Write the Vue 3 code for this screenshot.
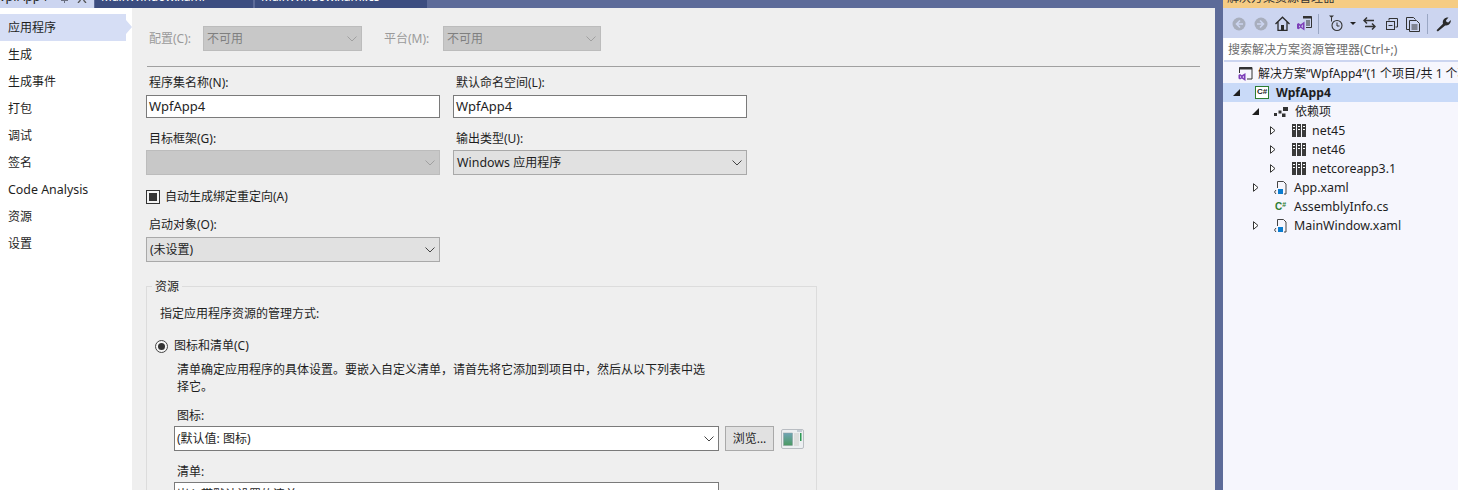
<script setup>
const navItems = ['应用程序', '生成', '生成事件', '打包', '调试', '签名', 'Code Analysis', '资源', '设置']
const chevron = 'M.5 .5L5 5l4.500-4.500'
</script>

<template>
  <div class="app">
    <div class="left">
      <div class="tabs">
        <div class="tab active">
          <span class="tab-text">WpfApp4</span>
          <svg class="tab-pin" width="7" height="3" viewBox="0 0 7 3"><path d="M0 .5h7M3.500 0v3" stroke="#6a6f80" fill="none" /></svg>
          <svg class="tab-x" width="10" height="3" viewBox="0 0 10 3"><path d="M1 3L3.500 0M9 3L6.500 0" stroke="#555" stroke-width="1.300" fill="none" /></svg>
        </div>
        <div class="tab t1"><span>MainWindow.xaml</span></div>
        <div class="tab t2"><span>MainWindow.xaml.cs</span></div>
      </div>
      <div class="editor">
        <nav class="nav">
          <div v-for="(n, i) in navItems" :key="n" class="nav-item" :class="{ sel: i === 0, lat: n === 'Code Analysis' }">{{ n }}</div>
        </nav>
        <main class="main">
          <div class="config">
            <span class="cfg-label l1">配置(C):</span>
            <div class="select disabled s1">不可用<svg class="chev" width="10" height="6" viewBox="0 0 10 6"><path :d="chevron" /></svg></div>
            <span class="cfg-label l2">平台(M):</span>
            <div class="select disabled s2">不可用<svg class="chev" width="10" height="6" viewBox="0 0 10 6"><path :d="chevron" /></svg></div>
          </div>
          <div class="sep"></div>

          <div class="two">
            <div class="col">
              <label class="lb">程序集名称(N):</label>
              <div class="input">WpfApp4</div>
            </div>
            <div class="col">
              <label class="lb">默认命名空间(L):</label>
              <div class="input">WpfApp4</div>
            </div>
          </div>

          <div class="two second">
            <div class="col">
              <label class="lb">目标框架(G):</label>
              <div class="select disabled"><svg class="chev" width="10" height="6" viewBox="0 0 10 6"><path :d="chevron" /></svg></div>
            </div>
            <div class="col">
              <label class="lb">输出类型(U):</label>
              <div class="select"><span class="lat">Windows </span>应用程序<svg class="chev dark" width="10" height="6" viewBox="0 0 10 6"><path :d="chevron" /></svg></div>
            </div>
          </div>

          <div class="check-row">
            <span class="check"><i></i></span>
            <span>自动生成绑定重定向(A)</span>
          </div>

          <div class="col startup">
            <label class="lb">启动对象(O):</label>
            <div class="select">(未设置)<svg class="chev dark" width="10" height="6" viewBox="0 0 10 6"><path :d="chevron" /></svg></div>
          </div>

          <section class="group">
            <span class="legend">资源</span>
            <p class="intro">指定应用程序资源的管理方式:</p>
            <div class="radio-row">
              <span class="radio"><i></i></span>
              <span>图标和清单(C)</span>
            </div>
            <div class="indent">
              <p class="desc">清单确定应用程序的具体设置。要嵌入自定义清单，请首先将它添加到项目中，然后从以下列表中选择它。</p>
              <label class="lb2">图标:</label>
              <div class="icon-row">
                <div class="combo">(默认值: 图标)<svg class="chev dark" width="10" height="6" viewBox="0 0 10 6"><path :d="chevron" /></svg></div>
                <div class="btn">浏览...</div>
                <svg class="preview" width="23" height="20" viewBox="0 0 23 20">
                  <rect x=".5" y=".5" width="22" height="19" rx="1.500" fill="#eceff1" stroke="#b9bdc2" />
                  <rect x="16" y="1" width="5" height="2" fill="#c3ccd4" />
                  <defs><linearGradient id="pv" x1="0" y1="0" x2="0" y2="1"><stop offset="0" stop-color="#6fa4b5" /><stop offset="1" stop-color="#4a9a62" /></linearGradient></defs>
                  <rect x="2.500" y="4" width="9" height="12.500" fill="url(#pv)" stroke="#8a9aa0" stroke-width=".5" />
                  <rect x="13" y="4" width="5" height="13" fill="#dcdedd" />
                  <rect x="19" y="4" width="1.500" height="8" fill="#2e9a55" />
                </svg>
              </div>
              <label class="lb2 manifest">清单:</label>
              <div class="combo wide">嵌入带默认设置的清单</div>
            </div>
          </section>
        </main>
      </div>
    </div>

    <aside class="panel">
      <div class="title"><span>解决方案资源管理器</span></div>
      <div class="toolbar">
        <svg width="14" height="14" viewBox="0 0 14 14" class="t-back"><circle cx="7" cy="7" r="6.500" fill="#a8aebd" /><path d="M8 3.500L4.500 7 8 10.500M4.500 7H11" stroke="#ccd5f0" stroke-width="1.600" fill="none" /></svg>
        <svg width="14" height="14" viewBox="0 0 14 14" class="t-fwd"><circle cx="7" cy="7" r="6.500" fill="#a8aebd" /><path d="M6 3.500L9.500 7 6 10.500M9.500 7H3" stroke="#ccd5f0" stroke-width="1.600" fill="none" /></svg>
        <svg width="15" height="15" viewBox="0 0 15 15" class="t-home"><path d="M.5 8L7.500 1.200 14.500 8M3 6v8.500h9V6" fill="none" stroke="#2a2a2a" stroke-width="1.300" /><rect x="6" y="9" width="3" height="5.500" fill="#2a2a2a" /></svg>
        <svg width="15" height="15" viewBox="0 0 15 15" class="t-sync"><path d="M6 .5h8.500v11H9" fill="#ccd5f0" stroke="#333" /><path d="M6 .5h8.500v2H6z" fill="#333" /><path d="M9 5h4M9 7h4M9 9h4" stroke="#333" /><path d="M0 8l1.500-1 2 1.500L7.500 5.500v9L3.500 11.800l-2 1.500L0 12.500zM2 9.200v2.400l1.200-1.200zM5.800 8.300l-1.500 2 1.500 2z" fill="#7d3fb8" fill-rule="evenodd" /></svg>
        <span class="t-div"></span>
        <svg width="16" height="17" viewBox="0 0 16 17" class="t-hist"><circle cx="9" cy="10.500" r="5" fill="none" stroke="#333" stroke-width="1.100" /><path d="M9 7.500V11h2.500" fill="none" stroke="#333" /><path d="M1 .5h5L3.500 3z" fill="#333" /><path d="M3.500 2.500v4" stroke="#333" /></svg>
        <svg width="6" height="3" viewBox="0 0 6 3" class="t-caret"><path d="M0 0h6L3 3z" fill="#222" /></svg>
        <svg width="13" height="13" viewBox="0 0 13 13" class="t-swap"><path d="M1 3.500h10M4 .5L1 3.500l3 3M12 9.500H2M9 6.500l3 3-3 3" fill="none" stroke="#333" stroke-width="1.500" /></svg>
        <svg width="12" height="12" viewBox="0 0 12 12" class="t-coll"><rect x=".5" y="3.500" width="8" height="8" fill="none" stroke="#333" /><path d="M3 2.500V.5h8.500V9h-2M2.500 7.500h4" fill="none" stroke="#333" /></svg>
        <svg width="15" height="15" viewBox="0 0 15 15" class="t-files"><path d="M3 12.500H.5V.5h7l2 2" fill="none" stroke="#333" /><path d="M3.500 3.500h7l3 3v8h-10z" fill="none" stroke="#333" /><path d="M5.500 8h6M5.500 10h6M5.500 12h6" stroke="#333" /></svg>
        <span class="t-div d2"></span>
        <svg width="15" height="15" viewBox="0 0 15 15" class="t-wrench"><path d="M1.800 14.500L.5 13.200 7 6.700C6.300 4.500 7 1.500 10.800.5c.7-.1 1.300 0 1.700.1L10 3.200l.5 1.800 1.800.5L14.800 3c.3 2.800-1.500 6-5.600 5.400z" fill="#2a2a2a" /></svg>
      </div>
      <div class="search">搜索解决方案资源管理器(Ctrl+;)</div>
      <div class="tree">
        <div class="row r0">
          <svg width="15" height="15" viewBox="0 0 15 15" class="ic"><path d="M1.500 7V1.500h12.500v11.500H9" fill="none" stroke="#333" /><path d="M1.500 2.500h12.500" stroke="#333" stroke-width="2" /><path d="M.5 9l1.500-1 1.800 1.300L7.500 7v8l-3.700-2.600L2 13.500l-1.500-1zM2.200 9.800v2.400l1.100-1.200zM5.800 9.800l-1.300 1.200 1.300 1.200z" fill="#7d3fb8" fill-rule="evenodd" /></svg>
          <span class="r0-text">解决方案“WpfApp4”(1 个项目/共 1 个项目)</span>
        </div>
        <div class="row r1 on">
          <svg width="7" height="7" viewBox="0 0 7 7" class="arr"><path d="M7 0v7H0z" fill="#1e1e1e" /></svg>
          <span class="cs">C#</span>
          <b>WpfApp4</b>
        </div>
        <div class="row r2">
          <svg width="7" height="7" viewBox="0 0 7 7" class="arr"><path d="M7 0v7H0z" fill="#1e1e1e" /></svg>
          <svg width="14" height="10" viewBox="0 0 14 10" class="dep"><path d="M9 0h5v4H9zM4.500 3.500h3v3h-3zM0 6h3v3H0zM8 6.500h3.500V10H8z" fill="#333" /></svg>
          <span>依赖项</span>
        </div>
        <div v-for="n in ['net45', 'net46', 'netcoreapp3.1']" :key="n" class="row r3">
          <svg width="6" height="9" viewBox="0 0 6 9" class="arr2"><path d="M.5.700L5 4.500.5 8.300z" fill="#fff" stroke="#333" /></svg>
          <svg width="14" height="13" viewBox="0 0 14 13" class="lib"><path d="M0 0h4v13H0zM5 0h4v13H5zM10 0h4v13h-4z" fill="#3a3a3a" /><path d="M1 2.500h2M6 2.500h2M11 2.500h2M1 5.500h2M6 5.500h2M11 5.500h2" stroke="#fff" /></svg>
          <span class="lat">{{ n }}</span>
        </div>
        <div class="row r4">
          <svg width="6" height="9" viewBox="0 0 6 9" class="arr2"><path d="M.5.700L5 4.500.5 8.300z" fill="#fff" stroke="#333" /></svg>
          <svg width="14" height="14" viewBox="0 0 14 14" class="doc"><path d="M3.500 7V.5h6l2.500 2.500v10H10" fill="none" stroke="#444" /><rect x="4" y="8" width="5" height="5" fill="#0a7ccf" /><path d="M2 9L.5 11 2 13" fill="none" stroke="#444" /></svg>
          <span class="lat">App.xaml</span>
        </div>
        <div class="row r5">
          <span class="csfile">C<sup>#</sup></span>
          <span class="lat">AssemblyInfo.cs</span>
        </div>
        <div class="row r4">
          <svg width="6" height="9" viewBox="0 0 6 9" class="arr2"><path d="M.5.700L5 4.500.5 8.300z" fill="#fff" stroke="#333" /></svg>
          <svg width="14" height="14" viewBox="0 0 14 14" class="doc"><path d="M3.500 7V.5h6l2.500 2.500v10H10" fill="none" stroke="#444" /><rect x="4" y="8" width="5" height="5" fill="#0a7ccf" /><path d="M2 9L.5 11 2 13" fill="none" stroke="#444" /></svg>
          <span class="lat">MainWindow.xaml</span>
        </div>
      </div>
    </aside>
  </div>
</template>

<style>
html, body { margin: 0; overflow: hidden; }
</style>

<style scoped>
.app {
  display: flex;
  width: 1458px;
  height: 490px;
  overflow: hidden;
  background: #5d6b99;
  font: 12px/16px "Noto Sans", "Noto Sans CJK SC", sans-serif;
  color: #1e1e1e;
}
.lat { font-size: 12.4px; }
.left { width: 1215px; display: flex; flex-direction: column; flex: none; }
.tabs { height: 8px; display: flex; overflow: hidden; flex: none; }
.tab { height: 8px; overflow: hidden; position: relative; color: #fff; font-size: 12px; line-height: 16px; white-space: nowrap; }
.tab span { display: block; margin-top: -11px; }
.tab.active { width: 94px; background: #ccd5f0; color: #1e1e1e; }
.tab.active .tab-text { position: absolute; left: -6px; top: 0; font-size: 12.4px; }
.tab-pin { position: absolute; left: 61px; top: 0; }
.tab-x { position: absolute; left: 77px; top: 0; }
.t1 { width: 158px; margin-left: 1px; background: #3c4d80; padding-left: 6px; box-sizing: border-box; }
.t2 { width: 172px; margin-left: 2px; background: #3c4d80; padding-left: 6px; box-sizing: border-box; }
.editor { flex: 1; display: flex; min-height: 0; }
.nav { width: 132px; flex: none; background: #fff; padding-top: 6px; box-sizing: border-box; }
.nav-item { height: 27px; line-height: 27px; padding-left: 8px; position: relative; width: 126px; box-sizing: border-box; }
.nav-item.sel { background: #d6def5; }
.nav-item.sel::after {
  content: ""; position: absolute; left: 126px; top: 6px;
  border-left: 6px solid #d6def5; border-top: 7px solid transparent; border-bottom: 7px solid transparent;
}
.main { flex: 1; background: #efefef; padding: 18px 15px 0 14px; min-width: 0; overflow: hidden; }
.config { display: flex; align-items: center; height: 25px; }
.cfg-label { color: #9a9a9a; }
.l1 { margin-left: 3px; width: 54px; }
.l2 { margin-left: 22px; width: 59px; }
.select {
  position: relative; width: 294px; height: 25px; line-height: 23px; box-sizing: border-box;
  background: #e1e1e1; border: 1px solid #a9a9a9; padding-left: 3px; color: #1e1e1e;
}
.select.disabled { background: #c8c8c8; border-color: #bcbcbc; color: #7f7f7f; }
.s1 { width: 159px; }
.s2 { width: 158px; }
.chev { position: absolute; right: 4px; top: 9px; fill: none; stroke: #a0a0a0; stroke-width: 1; }
.chev.dark { stroke: #444; }
.sep { height: 1px; background: #a0a0a0; margin: 15px 0 8px 1px; }
.two { display: flex; gap: 13px; }
.two.second { margin-top: 13px; }
.second .lb { margin-bottom: 4px; }
.col { width: 294px; display: flex; flex-direction: column; }
.lb { height: 15px; line-height: 15px; padding-left: 3px; margin-bottom: 5px; }
.input {
  height: 23px; line-height: 21px; box-sizing: border-box; background: #fff;
  border: 1px solid #7a7a7a; padding-left: 2px; font-size: 13px;
}
.check-row { display: flex; align-items: center; height: 14px; gap: 5px; margin-top: 15px; }
.check { width: 14px; height: 14px; box-sizing: border-box; border: 1px solid #333; display: flex; align-items: center; justify-content: center; background: #f4f4f4; }
.check i { width: 8px; height: 8px; background: #333; display: block; }
.startup { margin-top: 13px; }
.group {
  position: relative; width: 671px; height: 260px; box-sizing: border-box; margin-top: 24px;
  border: 1px solid #dcdcdc; padding: 19px 0 0 13px;
}
.legend { position: absolute; left: 5px; top: -8px; background: #efefef; padding: 0 3px; line-height: 15px; }
.intro { margin: 0; line-height: 16px; }
.radio-row { display: flex; align-items: center; height: 16px; gap: 6px; margin: 16px 0 0 -5px; }
.radio { width: 13px; height: 13px; box-sizing: border-box; border: 1px solid #444; border-radius: 50%; display: flex; align-items: center; justify-content: center; background: #f6f6f6; }
.radio i { width: 7px; height: 7px; border-radius: 50%; background: #333; display: block; }
.indent { margin: 7px 0 0 14px; }
.desc { margin: 0; width: 535px; line-height: 17px; padding-left: 3px; }
.lb2 { display: block; line-height: 16px; margin: 13px 0 2px; padding-left: 3px; }
.manifest { margin-top: 13px; margin-bottom: 2px; }
.icon-row { display: flex; align-items: center; }
.combo {
  position: relative; width: 545px; height: 25px; line-height: 23px; box-sizing: border-box; flex: none;
  background: #fff; border: 1px solid #7a7a7a; padding-left: 2px;
}
.combo.wide { white-space: nowrap; }
.btn {
  width: 49px; height: 25px; line-height: 23px; box-sizing: border-box; margin-left: 6px; text-align: center;
  background: #e1e1e1; border: 1px solid #a9a9a9;
}
.preview { margin-left: 7px; }

.panel { flex: none; width: 235px; margin-left: 8px; background: #f6f6f6; display: flex; flex-direction: column; overflow: hidden; }
.title { height: 8px; background: #f5cc84; overflow: hidden; white-space: nowrap; }
.title span { display: block; margin: -10px 0 0 4px; font-size: 12px; line-height: 16px; color: #333; }
.toolbar { height: 30px; background: #ccd5f0; display: flex; align-items: center; position: relative; }
.toolbar svg, .t-div { position: absolute; }
.t-back { left: 9px; top: 9px; }
.t-fwd { left: 31px; top: 9px; }
.t-home { left: 52px; top: 8px; }
.t-sync { left: 74px; top: 8px; }
.t-div { left: 95px; top: 6px; width: 1px; height: 20px; background: #9aa7c4; }
.d2 { left: 204px; }
.t-hist { left: 105px; top: 7px; }
.t-caret { left: 127px; top: 14px; }
.t-swap { left: 140px; top: 9px; }
.t-coll { left: 163px; top: 10px; }
.t-files { left: 183px; top: 9px; }
.t-wrench { left: 213px; top: 9px; }
.search { height: 22px; line-height: 24px; background: #fff; padding-left: 4px; color: #6d6d6d; white-space: nowrap; border-bottom: 2px solid #ccd5f0; margin-left: 1px; }
.tree { flex: 1; background: #f6f6fd; padding-top: 2px; white-space: nowrap; overflow: hidden; }
.row { height: 19px; display: flex; align-items: center; color: #1e1e1e; position: relative; }
.row.on { background: #c9daf8; }
.r0 { padding-left: 15px; gap: 5px; }
.ic, .r0-text { flex: none; }
.r1 { padding-left: 10px; }
.r1 b { margin-left: 7px; font-weight: 700; font-size: 12.2px; }
.arr { flex: none; }
.cs {
  width: 14px; height: 13px; box-sizing: border-box; margin-left: 15px; border: 1.500px solid #2d7d32; background: #fff;
  font: 700 8px/10px "Liberation Sans", sans-serif; text-align: center; color: #222; flex: none;
}
.r2 { padding-left: 29px; }
.dep { margin-left: 15px; margin-right: 7px; }
.r3 { padding-left: 47px; }
.lib { margin-left: 16px; margin-right: 6px; }
.r4 { padding-left: 30px; }
.doc { margin-left: 15px; margin-right: 6px; }
.r5 { padding-left: 52px; }
.csfile { width: 12px; margin-right: 7px; font: 700 10px/10px "Liberation Sans", sans-serif; color: #2e7d32; flex: none; }
.csfile sup { font-size: 7px; line-height: 0; vertical-align: 3px; }
</style>
